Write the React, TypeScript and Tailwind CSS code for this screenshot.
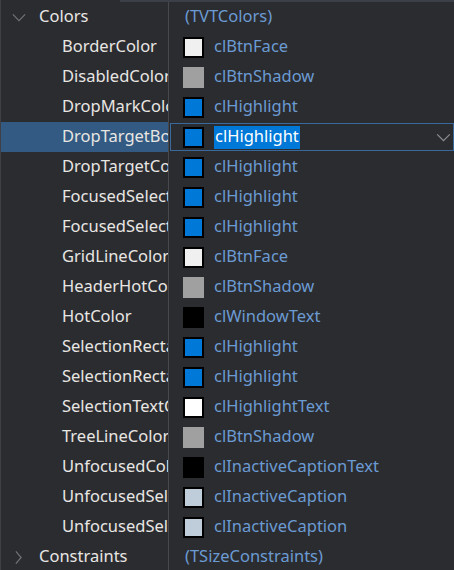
type Prop = {
  name: string;
  color: string;
  value: string;
  border?: string;
};

const props: Prop[] = [
  { name: "BorderColor", color: "#f0f0f0", value: "clBtnFace" },
  { name: "DisabledColor", color: "#a0a0a0", value: "clBtnShadow", border: "#a0a0a0" },
  { name: "DropMarkColor", color: "#0078d7", value: "clHighlight" },
  { name: "DropTargetBorderColor", color: "#0078d7", value: "clHighlight" },
  { name: "DropTargetColor", color: "#0078d7", value: "clHighlight" },
  { name: "FocusedSelectionBorderColor", color: "#0078d7", value: "clHighlight" },
  { name: "FocusedSelectionColor", color: "#0078d7", value: "clHighlight" },
  { name: "GridLineColor", color: "#f0f0f0", value: "clBtnFace" },
  { name: "HeaderHotColor", color: "#a0a0a0", value: "clBtnShadow", border: "#a0a0a0" },
  { name: "HotColor", color: "#000000", value: "clWindowText" },
  { name: "SelectionRectangleBlendColor", color: "#0078d7", value: "clHighlight" },
  { name: "SelectionRectangleBorderColor", color: "#0078d7", value: "clHighlight" },
  { name: "SelectionTextColor", color: "#ffffff", value: "clHighlightText" },
  { name: "TreeLineColor", color: "#a0a0a0", value: "clBtnShadow", border: "#a0a0a0" },
  { name: "UnfocusedColor", color: "#000000", value: "clInactiveCaptionText" },
  { name: "UnfocusedSelectionBorderColor", color: "#bfcddb", value: "clInactiveCaption" },
  { name: "UnfocusedSelectionColor", color: "#bfcddb", value: "clInactiveCaption" },
];

const SELECTED = 3;

function ChevronDown({ className }: { className?: string }) {
  return (
    <svg viewBox="0 0 16 10" className={className} fill="none" stroke="currentColor" strokeWidth="1.4">
      <path d="M1 1.5 8 8.5 15 1.5" />
    </svg>
  );
}

function ChevronRight({ className }: { className?: string }) {
  return (
    <svg viewBox="0 0 8 16" className={className} fill="none" stroke="currentColor" strokeWidth="1.4">
      <path d="M1 1 7 8 1 15" />
    </svg>
  );
}

function Swatch({ color, border }: { color: string; border?: string }) {
  return (
    <span
      className="w-[21px] h-[21px] shrink-0 border-2"
      style={{ backgroundColor: color, borderColor: border ?? "#000000" }}
    />
  );
}

export default function App() {
  return (
    <div
      className="w-[454px] h-[570px] overflow-hidden bg-[#2b2c30] border-l border-[#3e4046] text-[16.5px] leading-none"
      style={{ fontFamily: '"Noto Sans", "Segoe UI", sans-serif' }}
    >
      <div className="h-[2px] ml-[119px] bg-[#3b4048]" />

      {/* Colors category */}
      <div className="flex h-[30px]">
        <div className="w-[167px] shrink-0 flex items-center pl-[11px] overflow-hidden whitespace-nowrap text-[#e8e6e3]">
          <ChevronDown className="w-[14px] h-[9px] text-[#707277] mr-[13px]" />
          <span className="pb-[1px]">Colors</span>
        </div>
        <div className="w-px bg-[#46484d]" />
        <div className="flex-1 flex items-center pl-[16px] text-[#6b9bd3] whitespace-nowrap">
          <span className="pb-[1px]">(TVTColors)</span>
        </div>
      </div>

      {props.map((p, i) => {
        const selected = i === SELECTED;
        return (
          <div key={p.name} className="flex h-[30px]">
            <div
              className={
                "w-[167px] shrink-0 flex items-center pl-[61px] overflow-hidden whitespace-nowrap text-[#e8e6e3] " +
                (selected ? "bg-[#335a82]" : "")
              }
            >
              <span className="pb-[1px]">{p.name}</span>
            </div>
            <div className="w-px bg-[#46484d]" />
            {selected ? (
              <div className="flex-1 flex items-center ml-[1px] my-[1px] border border-[#3a6a9c] pl-[12px] pr-[2px]">
                <Swatch color={p.color} border={p.border} />
                <span className="ml-[10px] px-[1px] pb-[1px] h-[23px] flex items-center bg-[#0078d7] text-white whitespace-nowrap">
                  {p.value}
                </span>
                <span className="flex-1" />
                <ChevronDown className="w-[15px] h-[9px] text-[#8b8d91]" />
              </div>
            ) : (
              <div className="flex-1 flex items-center pl-[14px] whitespace-nowrap">
                <Swatch color={p.color} border={p.border} />
                <span className="ml-[10px] pb-[1px] text-[#6b9bd3]">{p.value}</span>
              </div>
            )}
          </div>
        );
      })}

      {/* Constraints category */}
      <div className="flex h-[30px]">
        <div className="w-[167px] shrink-0 flex items-center pl-[14px] overflow-hidden whitespace-nowrap text-[#e8e6e3]">
          <ChevronRight className="w-[7px] h-[15px] text-[#707277] mr-[17px]" />
          <span className="pb-[1px]">Constraints</span>
        </div>
        <div className="w-px bg-[#46484d]" />
        <div className="flex-1 flex items-center pl-[16px] text-[#6b9bd3] whitespace-nowrap">
          <span className="pb-[1px]">(TSizeConstraints)</span>
        </div>
      </div>
    </div>
  );
}
